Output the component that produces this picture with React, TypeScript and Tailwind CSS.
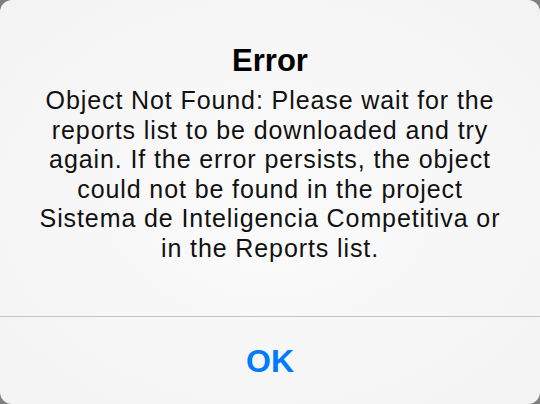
export default function App() {
  return (
    <div className="w-[540px] h-[404px] bg-[#7f7f7f]">
      <div
        className="h-full flex flex-col rounded-[12px] bg-[radial-gradient(ellipse_at_center,#fbfbfb_0%,#f3f3f3_100%)] text-center"
        style={{ fontFamily: '"Liberation Sans", Arial, sans-serif' }}
      >
        <div className="h-[316px] flex flex-col items-center pt-[41px] px-2">
          <h2 className="text-[31px] leading-[40px] font-bold text-black">Error</h2>
          <p className="mt-[5px] text-[25px] leading-[29.6px] tracking-[0.9px] whitespace-nowrap text-[#111]">
            Object Not Found: Please wait for the
            <br />
            reports list to be downloaded and try
            <br />
            again. If the error persists, the object
            <br />
            could not be found in the project
            <br />
            Sistema de Inteligencia Competitiva or
            <br />
            in the Reports list.
          </p>
        </div>
        <div className="h-px bg-[#c6c6ca]" />
        <button className="flex-1 flex items-center justify-center text-[32px] font-semibold text-[#007aff]">
          OK
        </button>
      </div>
    </div>
  );
}
